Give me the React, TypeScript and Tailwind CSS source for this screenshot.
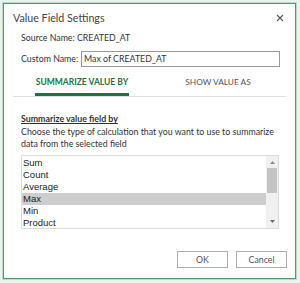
import React from "react"

const items = ["Sum", "Count", "Average", "Max", "Min", "Product"]

export default function App() {
  return (
    <div className="w-[300px] h-[283px] bg-[#eef2ef] pt-[3px] pl-[3px] font-['Lato',sans-serif] text-[#333]">
      <div className="w-[293px] h-[276px] bg-white border border-[#4f9a6c] shadow-[0_0_0_1px_#b9dcc5] flex flex-col">
        {/* Title */}
        <div className="flex items-center justify-between h-[16px] mt-[6px] pl-[9px] pr-[11px]">
          <span className="text-[10.7px] leading-[16px] text-[#444] whitespace-nowrap">Value Field Settings</span>
          <svg width="8" height="8" viewBox="0 0 8 8" className="text-[#555]">
            <path d="M1 1L7 7M7 1L1 7" stroke="currentColor" strokeWidth="1.1" />
          </svg>
        </div>

        <div className="pl-[17px] mt-[5px] text-[8.8px] leading-[14px] whitespace-nowrap">Source Name: CREATED_AT</div>

        <div className="flex items-center pl-[17px] mt-[6px] text-[8.8px] whitespace-nowrap">
          <span className="w-[60px]">Custom Name:</span>
          <div className="w-[199px] h-[16px] border border-[#9a9a9a] flex items-center pl-[2px] leading-[14px]">
            Max of CREATED_AT
          </div>
        </div>

        {/* Tabs */}
        <div className="mx-[9px] mt-[7px] border-b border-[#e0e0e0] flex h-[23px] whitespace-nowrap">
          <div className="ml-[22px] w-[94px] border-b-[3px] border-[#217346] text-center text-[8.5px] font-bold text-[#217346] leading-[14px] pt-[1px]">
            SUMMARIZE VALUE BY
          </div>
          <div className="ml-[49px] w-[80px] text-center text-[8.3px] text-[#555] leading-[14px] pt-[1px]">
            SHOW VALUE AS
          </div>
        </div>

        <div className="pl-[17px] mt-[16px] text-[8.8px] leading-[12px] whitespace-nowrap">
          <div className="font-bold underline">Summarize value field by</div>
          <div className="mt-[1px] leading-[11.5px]">
            Choose the type of calculation that you want to use to summarize
            <br />
            data from the selected field
          </div>
        </div>

        {/* List */}
        <div className="ml-[17px] mt-[6px] w-[258px] h-[74px] border border-[#dcdcdc] flex font-['Liberation_Sans',sans-serif] text-[9.5px] leading-[12px] text-[#222]">
          <div className="flex-1 pt-[1px]">
            {items.map((it) => (
              <div key={it} className={`pl-[1px] h-[12px] ${it === "Max" ? "bg-[#cdcdcd]" : ""}`}>
                {it}
              </div>
            ))}
          </div>
          <div className="w-[12px] bg-[#f0f0f0] flex flex-col items-center">
            <svg width="5" height="3" viewBox="0 0 5 3" className="mt-[5px]">
              <path d="M0 3L2.5 0L5 3Z" fill="#8a8a8a" />
            </svg>
            <div className="mt-[4px] w-[10px] h-[25px] bg-[#c4c4c4]" />
            <div className="flex-1" />
            <svg width="5" height="3" viewBox="0 0 5 3" className="mb-[5px]">
              <path d="M0 0L5 0L2.5 3Z" fill="#6a6a6a" />
            </svg>
          </div>
        </div>

        <div className="flex-1" />
        <div className="flex justify-end gap-[8px] pr-[8px] mb-[10px] text-[8.8px] text-[#555]">
          <div className="w-[51px] h-[17px] border border-[#adadad] flex items-center justify-center">OK</div>
          <div className="w-[51px] h-[17px] border border-[#adadad] flex items-center justify-center">Cancel</div>
        </div>
      </div>
    </div>
  )
}
